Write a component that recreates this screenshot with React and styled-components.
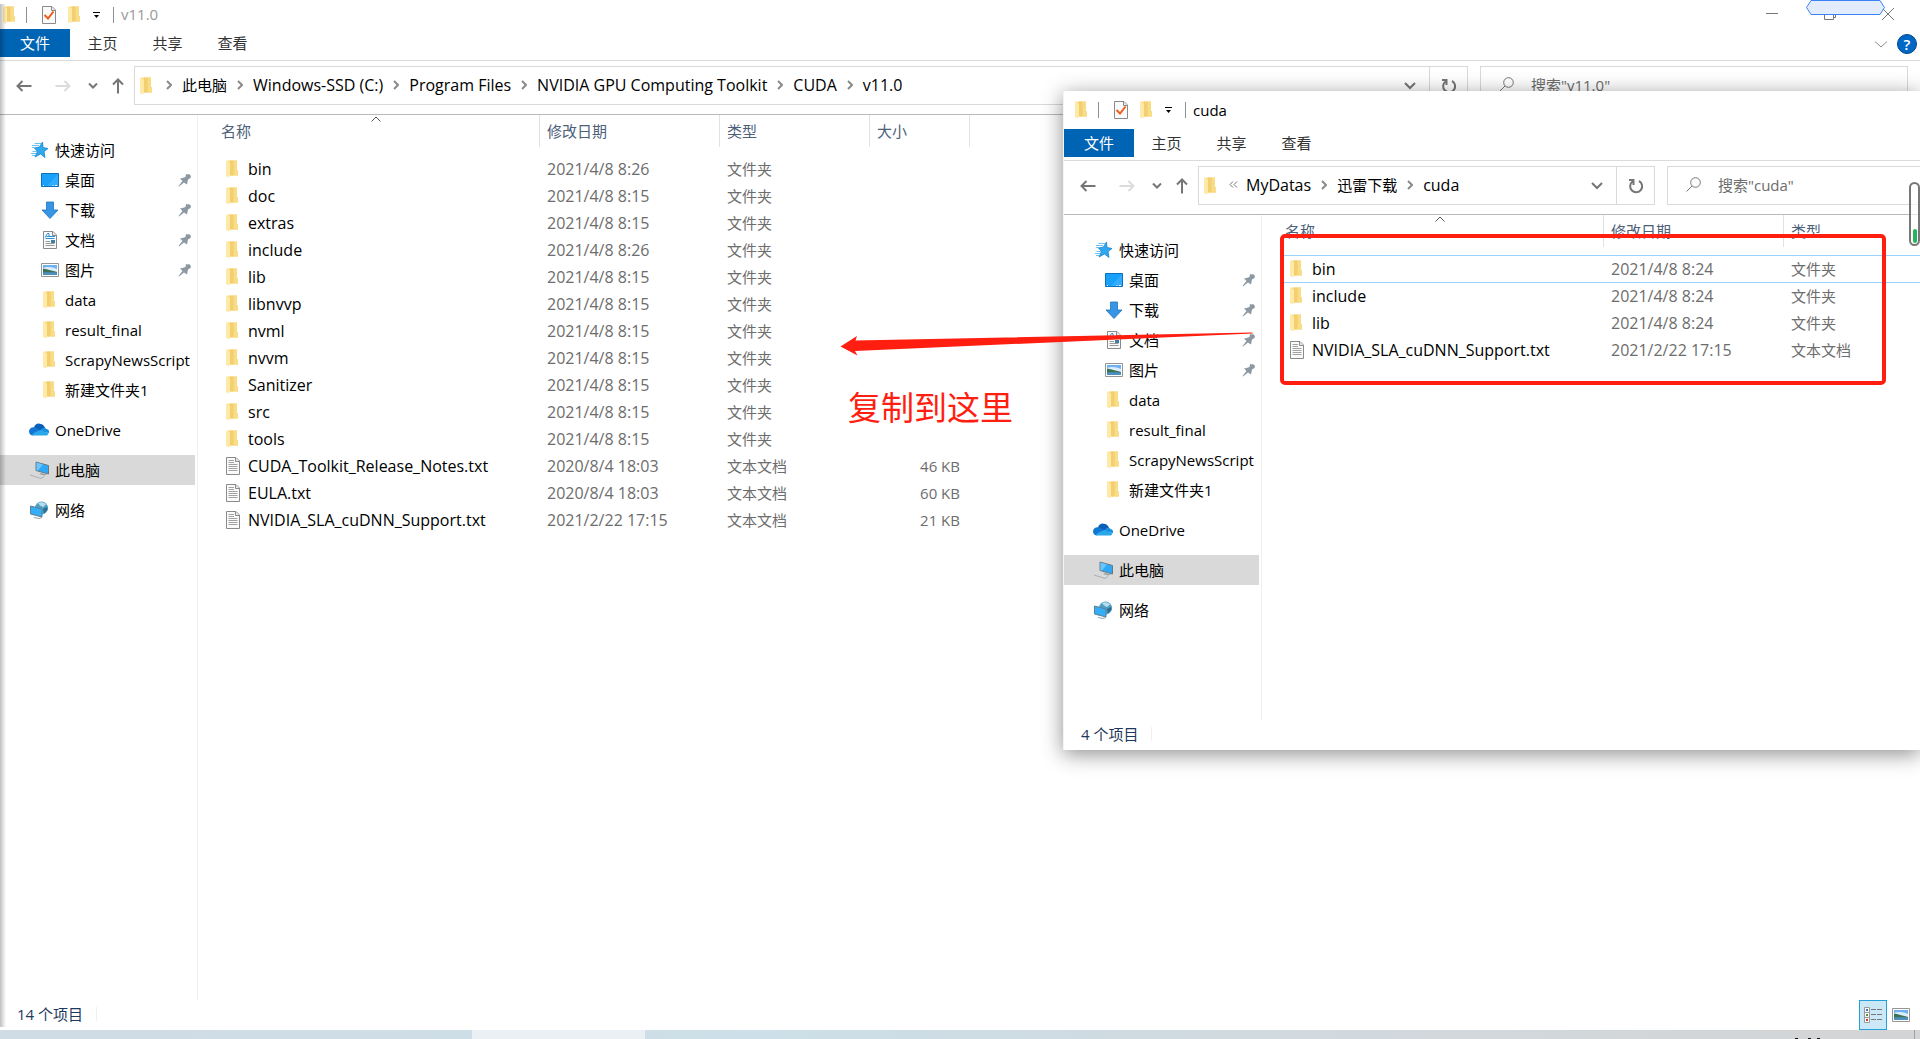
import React from "react";
import styled, { createGlobalStyle, css } from "styled-components";

const GlobalStyle = createGlobalStyle`
  * {
    box-sizing: border-box;
  }
  body {
    margin: 0;
    overflow: hidden;
    background: #fff;
  }
  body, button, input {
    font-family: "Open Sans", "Noto Sans CJK SC", sans-serif;
    font-size: 15px;
    line-height: 20px;
  }
  button {
    padding: 0;
    border: 0;
    background: none;
    color: inherit;
    cursor: pointer;
  }
  svg {
    display: block;
    flex: none;
  }
`;

const Desktop = styled.div`
  position: relative;
  display: flex;
  flex-direction: column;
  height: 100vh;
  overflow: hidden;
`;

const Window = styled.section`
  display: flex;
  flex-direction: column;
  background: #fff;
  overflow: hidden;
  ${(props) =>
    props.$floating
      ? css`
          position: absolute;
          top: 91px;
          left: 1063px;
          right: 0;
          height: 659px;
          border-left: 1px solid #f4f4f4;
          box-shadow: 0 4px 20px rgba(0, 0, 0, 0.45);
        `
      : css`
          flex: 1;
          min-height: 0;
        `}
`;

const TitleBar = styled.header`
  display: flex;
  align-items: center;
  flex: none;
  height: ${(props) => (props.$floating ? 38 : 29)}px;
  padding-left: ${(props) => (props.$floating ? 9 : 1)}px;
  padding-right: 3px;
`;

const QuickTools = styled.div`
  display: flex;
  align-items: center;
  gap: 8px;
  margin: 0 12px 0 13px;
`;

const Separator = styled.span`
  width: 1px;
  height: 16px;
  margin-left: ${(props) => props.$gap || 0}px;
  background: #8f8f8f;
`;

const Title = styled.h1`
  margin: 0 0 0 7px;
  padding-bottom: ${(props) => (props.$floating ? 0 : 2)}px;
  font-size: 15px;
  font-weight: 400;
  color: ${(props) => (props.$floating ? "#000" : "#999")};
`;

const WindowButtons = styled.div`
  display: flex;
  align-self: flex-start;
  margin-left: auto;
`;

const WindowButton = styled.button`
  display: grid;
  place-items: center;
  width: 58px;
  height: 28px;
`;

const Ribbon = styled.nav`
  display: flex;
  align-items: flex-start;
  flex: none;
  height: 32px;
  padding-right: 3px;
  border-bottom: 1px solid #dadbdc;
`;

const RibbonTab = styled.button`
  width: ${(props) => (props.$primary ? 70 : 65)}px;
  height: 28px;
  color: ${(props) => (props.$primary ? "#fff" : "#333")};
  background: ${(props) => (props.$primary ? "#0064b4" : "none")};
`;

const RibbonTools = styled.div`
  display: flex;
  align-items: center;
  gap: 10px;
  height: 30px;
  margin-left: auto;
`;

const HelpButton = styled.button`
  width: 20px;
  height: 20px;
  border: 1px solid #00498a;
  border-radius: 50%;
  background: #0067c5;
  color: #fff;
  font-weight: 600;
  line-height: 18px;
`;

const AddressRow = styled.div`
  display: flex;
  flex: none;
  height: 54px;
  padding: 5px ${(props) => (props.$floating ? 0 : 12)}px 0 4px;
  border-bottom: 1px solid #b9b9b9;
`;

const NavButton = styled.button`
  display: grid;
  place-items: center;
  width: ${(props) => props.$width}px;
  height: 40px;
`;

const AddressBox = styled.div`
  display: flex;
  align-items: center;
  flex: 1;
  min-width: 0;
  height: 39px;
  margin: 0 12px 0 2px;
  padding-left: 3px;
  border: 1px solid #d9d9d9;
`;

const Crumb = styled.a`
  padding-bottom: 2px;
  color: #000;
  font-size: ${(props) => (props.$latin ? 16 : 15)}px;
  text-decoration: none;
  white-space: nowrap;
`;

const CrumbArrow = styled.span`
  display: grid;
  place-items: center;
  width: 26px;
  padding-bottom: 2px;
`;

const BoxButton = styled.button`
  display: grid;
  place-items: center;
  width: 38px;
  height: 37px;
  ${(props) => props.$push && "margin-left: auto;"}
  ${(props) => props.$divided && "border-left: 1px solid #d9d9d9;"}
`;

const SearchBox = styled.label`
  display: flex;
  align-items: center;
  gap: 17px;
  flex: none;
  width: ${(props) => (props.$floating ? 253 : 428)}px;
  height: 39px;
  padding: 0 0 2px 18px;
  border: 1px solid #d9d9d9;
  ${(props) => props.$floating && "border-right: 0;"}
`;

const SearchInput = styled.input`
  flex: 1;
  min-width: 0;
  padding: 0;
  border: 0;
  outline: 0;
  background: none;
  &::placeholder {
    color: #6d6d6d;
    opacity: 1;
  }
`;

const Body = styled.div`
  display: flex;
  flex: 1;
  min-height: 0;
`;

const Sidebar = styled.nav`
  flex: none;
  width: 198px;
  padding: 20px 2px 0 0;
  border-right: 1px solid #f0f0f0;
`;

const PlaceGroup = styled.div`
  margin-bottom: 10px;
`;

const Place = styled.a`
  display: flex;
  align-items: center;
  gap: 6px;
  height: 30px;
  padding-left: ${(props) => (props.$child ? 41 : 29)}px;
  overflow: hidden;
  color: #000;
  text-decoration: none;
  white-space: nowrap;
  background: ${(props) => (props.$active ? "#d9d9d9" : "none")};
  & > svg:last-child:not(:first-child) {
    margin-left: auto;
    margin-right: 3px;
  }
`;

const FilePane = styled.main`
  flex: 1;
  min-width: 0;
  overflow: hidden;
  padding-left: 20px;
`;

const FileTable = styled.table`
  table-layout: fixed;
  width: ${(props) => (props.$wide ? "100%" : "752px")};
  border-collapse: separate;
  border-spacing: 0;
`;

const HeadCell = styled.th`
  position: relative;
  width: ${(props) => (props.$width ? `${props.$width}px` : "auto")};
  height: 32px;
  padding: 0 0 0 ${(props) => (props.$sorted ? 3 : 7)}px;
  border-right: ${(props) => (props.$width ? "1px solid #e2e2e2" : "0")};
  color: #4c607a;
  font-weight: 400;
  text-align: left;
  & > svg {
    position: absolute;
    top: 1px;
    left: 153px;
  }
`;

const FileBody = styled.tbody`
  &::before {
    content: "";
    display: block;
    height: 9px;
  }
`;

const FileRow = styled.tr`
  ${(props) =>
    props.$focused &&
    "td { box-shadow: 0 -1px 0 #99d1ff, inset 0 -1px 0 #99d1ff; }"}
`;

const Cell = styled.td`
  height: 27px;
  padding: 0 10px 2px 7px;
  color: #6d6d6d;
  font-size: ${(props) => (props.$latin ? 16 : 15)}px;
  text-align: ${(props) => props.$align || "left"};
  white-space: nowrap;
`;

const FileName = styled.div`
  display: flex;
  align-items: center;
  gap: 6px;
  color: #000;
`;

const NameCell = styled(Cell)`
  padding: 0 0 2px 6px;
`;

const StatusBar = styled.footer`
  display: flex;
  align-items: center;
  flex: none;
  height: 30px;
  padding: 0 5px 2px 17px;
  color: #1e395b;
`;

const StatusDivider = styled.span`
  width: 1px;
  height: 14px;
  margin-left: 13px;
  background: #f0f0f0;
`;

const ViewButtons = styled.div`
  display: flex;
  align-self: flex-start;
  margin-left: auto;
`;

const ViewButton = styled.button`
  display: grid;
  place-items: center;
  width: 28px;
  height: 30px;
  border: 1px solid ${(props) => (props.$active ? "#26a0da" : "transparent")};
  background: ${(props) => (props.$active ? "#cbe8f6" : "none")};
`;

const Taskbar = styled.div`
  display: flex;
  align-items: stretch;
  flex: none;
  height: 9px;
  padding-right: 5px;
  background: linear-gradient(90deg, #d0dce5, #cddfe8 40%, #d2d8dc 75%, #d3d4d5);
`;

const TaskButton = styled.button`
  width: 173px;
  margin-left: 472px;
  margin-right: auto;
  background: #eaf0f4;
`;

const Tray = styled.div`
  display: flex;
  align-items: flex-end;
  padding-right: 93px;
  border-right: 1px solid #a0a0a0;
`;

const EdgeShadow = styled.div`
  position: absolute;
  top: 4px;
  bottom: 12px;
  left: 0;
  width: 6px;
  background: linear-gradient(90deg, rgba(0, 0, 0, 0.25), transparent);
  pointer-events: none;
`;

const MarkBox = styled.div`
  position: absolute;
  top: 234px;
  left: 1280px;
  width: 606px;
  height: 151px;
  border: 4px solid #ff1e10;
  border-radius: 5px;
  pointer-events: none;
`;

const MarkArrow = styled.svg`
  position: absolute;
  top: 326px;
  left: 840px;
  pointer-events: none;
`;

const MarkText = styled.p`
  position: absolute;
  top: 388px;
  left: 848px;
  margin: 0;
  color: #ff1e10;
  font-size: 33px;
  line-height: 40px;
`;

const DockTab = styled.svg`
  position: absolute;
  top: 0;
  right: 35px;
`;

const Gauge = styled.div`
  position: absolute;
  top: 182px;
  right: 0;
  display: flex;
  align-items: flex-end;
  justify-content: center;
  width: 11px;
  height: 64px;
  padding-bottom: 1px;
  border: 2px solid #777;
  border-radius: 6px;
  background: rgba(255, 255, 255, 0.6);
`;

const GaugeLevel = styled.span`
  width: 4px;
  height: 14px;
  border-radius: 2px;
  background: #27b462;
`;

function FolderIcon() {
  return (
    <svg width="18" height="18" viewBox="0 0 18 18">
      <path d="M4 0.500H13V10L14 10.500V15.500H4Z" fill="#f7d87d" />
      <path d="M6 0.500H9.500V15.500H6Z" fill="#f2cf70" />
      <path d="M10 0.500H13V10L14 10.500V15.500H10Z" fill="#f9dc86" />
      <path d="M2 0.500H3.500L6 3V15L5 17.500L2 16Z" fill="#ffe9a6" />
    </svg>
  );
}

function PageIcon({ children }) {
  return (
    <svg width="18" height="18" viewBox="0 0 18 18">
      <path d="M2.500 0.500H12L15.500 4V17.500H2.500Z" fill="#fafafa" stroke="#8a8a8a" />
      <path d="M11.500 1V4.500H15.500" fill="#e8e8e8" stroke="#8a8a8a" />
      {children}
    </svg>
  );
}

function TextIcon() {
  return (
    <PageIcon>
      <path
        d="M4.500 3.500H10M4.500 5.500H10M4.500 7.500H13.500M4.500 9.500H13.500M4.500 11.500H13.500M4.500 13.500H13.500"
        stroke="#a2a2a2"
      />
    </PageIcon>
  );
}

function PropertiesIcon() {
  return (
    <PageIcon>
      <path d="M4.500 9L8 12.500L13.500 5.500" fill="none" stroke="#f05a1a" strokeWidth="2" />
    </PageIcon>
  );
}

function DocumentIcon() {
  return (
    <PageIcon>
      <path d="M4 6.500L6.500 2.500H8V6M5.500 5.500H14M4.500 7.500H13.500" fill="none" stroke="#2590d6" />
      <path d="M4.500 10.500H9M4.500 12.500H13.500M4.500 14.500H13.500" stroke="#9a9a9a" />
      <path d="M10 9H14V12H10Z" fill="#3d7ea8" />
    </PageIcon>
  );
}

function StarIcon() {
  return (
    <svg width="20" height="18" viewBox="-2 0 20 18">
      <path
        d="M11.500 1L12 6.500L17 7.500L13 10.500L14 16.500L9.500 13L4 16L6.500 10.500L3.500 7L8.500 6Z"
        fill="#2fa8f0"
        stroke="#1583cc"
        strokeWidth="0.8"
      />
      <path d="M3.500 2.500H10M1 4.500H8M1 6.500H4M1.500 10.500H6M0 12.500H5M1 14.500H4" stroke="#6cc2f4" />
    </svg>
  );
}

function DesktopIcon() {
  return (
    <svg width="18" height="18" viewBox="0 0 18 18">
      <path d="M0.500 2.500H17.500V15.500H0.500Z" fill="#19a0fb" stroke="#0a72bd" />
      <path d="M17 3V15H6Z" fill="#32acff" />
      <path d="M2 14.500H3M14 14.500H16M11.500 14.500H12.500" stroke="#fff" />
    </svg>
  );
}

function DownloadIcon() {
  return (
    <svg width="18" height="18" viewBox="0 0 18 18">
      <path
        d="M5.500 1H12.500V9H17L9 17.500L1 9H5.500Z"
        fill="#3795e6"
        stroke="#1f74bd"
        strokeWidth="0.8"
      />
    </svg>
  );
}

function PictureIcon() {
  return (
    <svg width="18" height="18" viewBox="0 0 18 18">
      <path d="M0.500 2.500H17.500V15.500H0.500Z" fill="#fff" stroke="#959595" />
      <path d="M2 4H16V14H2Z" fill="#6fb2f3" />
      <path d="M2 7C6 5 12 6 16 8V11H2Z" fill="#dceefb" />
      <path d="M2 7.500C5 8 9 9 16 11V12H2Z" fill="#3d7355" />
      <path d="M2 11.500C7 11 11 11.500 16 11.500V14H2Z" fill="#4d8fbf" />
    </svg>
  );
}

function CloudIcon() {
  return (
    <svg width="20" height="18" viewBox="0 0 20 18">
      <path d="M5 7C5.500 3 9 1.500 12 3C14 3.500 15.500 5 16 7L8 11Z" fill="#0a5fb8" />
      <path d="M0 10.500C0 7.500 3 5.500 6 6.500L12 9.500L4 14.500C2 14.500 0 13 0 10.500Z" fill="#1276d3" />
      <path d="M12 9C13 6.500 16 6 17.500 8C20 8.500 20.500 10.500 20 12L12 11Z" fill="#1a8fe0" />
      <path d="M3 14C5 11 9 10 11.500 9L19.500 12.500C19 14 18 14.500 17 14.500H4.500Z" fill="#29a7ea" />
    </svg>
  );
}

function ComputerIcon() {
  return (
    <svg width="20" height="18" viewBox="0 0 20 18">
      <path d="M7 1L19.500 4.500V13L7 9.500Z" fill="#2ea9f7" stroke="#6b7880" />
      <path d="M7.500 1.500L14 3.500L9 9.500L7.500 9Z" fill="#6cc5fb" />
      <path d="M12 12L18 13.500L15 14.500L10 13" fill="#9aa2a8" />
      <path d="M1 14L12 17.500L15 15.500" fill="none" stroke="#a8b0b5" />
    </svg>
  );
}

function NetworkIcon() {
  return (
    <svg width="20" height="18" viewBox="0 0 20 18">
      <circle cx="12.500" cy="7" r="6.500" fill="#4f9fc4" />
      <path d="M9 2C12 0.500 15 1 17 3.500L14 6L11 4.500Z" fill="#b8dcec" />
      <path d="M14 8L18 6L18.500 9L15 12.500Z" fill="#2b6c91" />
      <path d="M1.500 5L13 8V16L1.500 13Z" fill="#35aef8" stroke="#5e7f94" />
      <path d="M5 16.500L10 17.500L13 16.500" fill="none" stroke="#9aa2a8" />
    </svg>
  );
}

function PinIcon() {
  return (
    <svg width="14" height="14" viewBox="0 0 14 14">
      <path
        d="M8 1L9.500 1.500L11 1L13 3L12.500 5L10 6.500L9.500 9L9 11.500L6 9.500L1 13.500L0.500 13L4.500 8L2 5.500L4.500 5L7.500 4Z"
        fill="#8c99a3"
      />
    </svg>
  );
}

function Stroke({ width, height, d, color = "#767676", weight = 1 }) {
  return (
    <svg width={width} height={height} viewBox={`0 0 ${width} ${height}`}>
      <path d={d} fill="none" stroke={color} strokeWidth={weight} />
    </svg>
  );
}

function RefreshIcon() {
  return (
    <Stroke
      width={16}
      height={16}
      weight={2}
      d="M11 3A6 6 0 1 1 4.500 3.500M1 2H5.500V7"
    />
  );
}

function SearchIcon() {
  return (
    <svg width="15" height="15" viewBox="0 0 15 15" fill="none" stroke="#767676">
      <circle cx="9.500" cy="5.500" r="4.800" />
      <path d="M6 9L0.500 14.500" />
    </svg>
  );
}

function DetailsIcon() {
  return (
    <svg width="18" height="16" viewBox="0 0 18 16">
      <path d="M0.500 0.500H5.500V15.500H0.500ZM0.500 5.500H5.500M0.500 10.500H5.500" fill="#fff" stroke="#999" />
      <path d="M2 2H4V4H2Z" fill="#3b7ab5" />
      <path d="M2 7H4V9H2Z" fill="#5f8a3c" />
      <path d="M2 12H4V14H2Z" fill="#c63b2b" />
      <path d="M7 2.500H12M13 2.500H18M7 7.500H12M13 7.500H18M7 12.500H12M13 12.500H18" stroke="#777" />
    </svg>
  );
}

const quickAccess = [
  { name: "桌面", Icon: DesktopIcon, pinned: true },
  { name: "下载", Icon: DownloadIcon, pinned: true },
  { name: "文档", Icon: DocumentIcon, pinned: true },
  { name: "图片", Icon: PictureIcon, pinned: true },
  { name: "data", Icon: FolderIcon },
  { name: "result_final", Icon: FolderIcon },
  { name: "ScrapyNewsScript", Icon: FolderIcon },
  { name: "新建文件夹1", Icon: FolderIcon },
];

const folder = (name, date) => ({ name, date, type: "文件夹" });
const text = (name, date, size) => ({ name, date, type: "文本文档", size });

const toolkitFiles = [
  folder("bin", "2021/4/8 8:26"),
  folder("doc", "2021/4/8 8:15"),
  folder("extras", "2021/4/8 8:15"),
  folder("include", "2021/4/8 8:26"),
  folder("lib", "2021/4/8 8:15"),
  folder("libnvvp", "2021/4/8 8:15"),
  folder("nvml", "2021/4/8 8:15"),
  folder("nvvm", "2021/4/8 8:15"),
  folder("Sanitizer", "2021/4/8 8:15"),
  folder("src", "2021/4/8 8:15"),
  folder("tools", "2021/4/8 8:15"),
  text("CUDA_Toolkit_Release_Notes.txt", "2020/8/4 18:03", "46 KB"),
  text("EULA.txt", "2020/8/4 18:03", "60 KB"),
  text("NVIDIA_SLA_cuDNN_Support.txt", "2021/2/22 17:15", "21 KB"),
];

const cudnnFiles = [
  folder("bin", "2021/4/8 8:24"),
  folder("include", "2021/4/8 8:24"),
  folder("lib", "2021/4/8 8:24"),
  text("NVIDIA_SLA_cuDNN_Support.txt", "2021/2/22 17:15"),
];

function Places() {
  return (
    <Sidebar aria-label="导航窗格">
      <PlaceGroup>
        <Place href="#quick">
          <StarIcon />
          快速访问
        </Place>
        {quickAccess.map(({ name, Icon, pinned }) => (
          <Place key={name} href="#place" $child>
            <Icon />
            {name}
            {pinned && <PinIcon />}
          </Place>
        ))}
      </PlaceGroup>
      <PlaceGroup>
        <Place href="#onedrive">
          <CloudIcon />
          OneDrive
        </Place>
      </PlaceGroup>
      <PlaceGroup>
        <Place href="#pc" $active>
          <ComputerIcon />
          此电脑
        </Place>
      </PlaceGroup>
      <PlaceGroup>
        <Place href="#network">
          <NetworkIcon />
          网络
        </Place>
      </PlaceGroup>
    </Sidebar>
  );
}

function Files({ files, focused, showSize }) {
  return (
    <FilePane>
      <FileTable $wide={!showSize}>
        <thead>
          <tr>
            <HeadCell $width={322} $sorted>
              名称
              <Stroke width={10} height={6} d="M0.500 5.500L5 1L9.500 5.500" color="#555" />
            </HeadCell>
            <HeadCell $width={180}>修改日期</HeadCell>
            <HeadCell $width={showSize && 150}>类型</HeadCell>
            {showSize && <HeadCell $width={100}>大小</HeadCell>}
          </tr>
        </thead>
        <FileBody>
          {files.map((file) => (
            <FileRow key={file.name} $focused={file.name === focused}>
              <NameCell $latin>
                <FileName>
                  {file.type === "文件夹" ? <FolderIcon /> : <TextIcon />}
                  {file.name}
                </FileName>
              </NameCell>
              <Cell $latin>{file.date}</Cell>
              <Cell>{file.type}</Cell>
              {showSize && <Cell $align="right">{file.size}</Cell>}
            </FileRow>
          ))}
        </FileBody>
      </FileTable>
    </FilePane>
  );
}

function Explorer({ title, crumbs, collapsed, files, focused, floating }) {
  return (
    <Window $floating={floating}>
      <TitleBar $floating={floating}>
        <FolderIcon />
        <Separator $gap={7} />
        <QuickTools>
          <PropertiesIcon />
          <FolderIcon />
          <svg width="9" height="8" viewBox="0 0 9 8">
            <path d="M1 1.500H8" stroke="#000" />
            <path d="M2 4H7L4.500 7Z" />
          </svg>
        </QuickTools>
        <Separator />
        <Title $floating={floating}>{title}</Title>
        {!floating && (
          <WindowButtons>
            <WindowButton aria-label="最小化">
              <Stroke width={12} height={12} d="M0 5.500H12" />
            </WindowButton>
            <WindowButton aria-label="还原">
              <Stroke width={12} height={12} d="M0.500 2.500H9.500V11.500H0.500ZM2.500 2V0.500H11.500V9.500H10" />
            </WindowButton>
            <WindowButton aria-label="关闭">
              <Stroke width={12} height={12} d="M0 0L12 12M12 0L0 12" />
            </WindowButton>
          </WindowButtons>
        )}
      </TitleBar>
      <Ribbon>
        <RibbonTab $primary>文件</RibbonTab>
        <RibbonTab>主页</RibbonTab>
        <RibbonTab>共享</RibbonTab>
        <RibbonTab>查看</RibbonTab>
        {!floating && (
          <RibbonTools>
            <button aria-label="展开功能区">
              <Stroke width={12} height={7} d="M0 0.500L6 6L12 0.500" color="#8a8a8a" />
            </button>
            <HelpButton aria-label="帮助">?</HelpButton>
          </RibbonTools>
        )}
      </Ribbon>
      <AddressRow $floating={floating}>
        <NavButton $width={39} aria-label="后退">
          <Stroke width={16} height={12} weight={2} d="M15.500 6H1.500M6.500 1L1.500 6L6.500 11" />
        </NavButton>
        <NavButton $width={39} aria-label="前进">
          <Stroke width={16} height={12} weight={2} color="#dcdcdc" d="M0.500 6H14.500M9.500 1L14.500 6L9.500 11" />
        </NavButton>
        <NavButton $width={22} aria-label="最近位置">
          <Stroke width={10} height={6} weight={2} d="M1 0.500L5 4.500L9 0.500" />
        </NavButton>
        <NavButton $width={28} aria-label="上移">
          <Stroke width={12} height={16} weight={2} d="M6 15.500V1.500M1 6.500L6 1.500L11 6.500" />
        </NavButton>
        <AddressBox>
          <FolderIcon />
          {crumbs.map((crumb, i) => (
            <React.Fragment key={crumb}>
              <CrumbArrow>
                {collapsed && i === 0 ? (
                  <Stroke width={9} height={7} d="M4 0.500L1 3.500L4 6.500M8 0.500L5 3.500L8 6.500" />
                ) : (
                  <Stroke width={6} height={10} weight={2} d="M1 1L5 5L1 9" color="#8a8a8a" />
                )}
              </CrumbArrow>
              <Crumb href="#crumb" $latin={/^[\x20-\x7e]+$/.test(crumb)}>
                {crumb}
              </Crumb>
            </React.Fragment>
          ))}
          <BoxButton $push aria-label="以前的位置">
            <Stroke width={12} height={8} weight={2} d="M1 1L6 6L11 1" />
          </BoxButton>
          <BoxButton $divided aria-label="刷新">
            <RefreshIcon />
          </BoxButton>
        </AddressBox>
        <SearchBox $floating={floating}>
          <SearchIcon />
          <SearchInput type="text" aria-label="搜索" placeholder={`搜索"${title}"`} />
        </SearchBox>
      </AddressRow>
      <Body>
        <Places />
        <Files files={files} focused={focused} showSize={!floating} />
      </Body>
      <StatusBar>
        {files.length} 个项目
        <StatusDivider />
        {!floating && (
          <ViewButtons>
            <ViewButton $active aria-label="详细信息">
              <DetailsIcon />
            </ViewButton>
            <ViewButton aria-label="大缩略图">
              <PictureIcon />
            </ViewButton>
          </ViewButtons>
        )}
      </StatusBar>
    </Window>
  );
}

export default function App() {
  return (
    <>
      <GlobalStyle />
      <Desktop>
        <Explorer
          title="v11.0"
          crumbs={[
            "此电脑",
            "Windows-SSD (C:)",
            "Program Files",
            "NVIDIA GPU Computing Toolkit",
            "CUDA",
            "v11.0",
          ]}
          files={toolkitFiles}
        />
        <Taskbar>
          <TaskButton aria-label="文件资源管理器" />
          <Tray>
            <Stroke width={27} height={1} color="#111" d="M1 0.500H4M14 0.500H17M23 0.500H26" />
          </Tray>
        </Taskbar>
        <EdgeShadow />
        <DockTab width="79" height="16" viewBox="0 0 79 16">
          <path
            d="M5 0.500H74L78.500 7.500L74 14.500H5L0.500 7.500Z"
            fill="#e3ecfd"
            stroke="#3b82f6"
            strokeLinejoin="round"
          />
        </DockTab>
        <Explorer
          floating
          collapsed
          title="cuda"
          crumbs={["MyDatas", "迅雷下载", "cuda"]}
          files={cudnnFiles}
          focused="bin"
        />
        <Gauge>
          <GaugeLevel />
        </Gauge>
        <MarkBox />
        <MarkArrow width="414" height="32" viewBox="0 0 414 32">
          <path d="M0.500 20.500L17 10L15.500 14.500L412 6.500L413 7.500L15 25L17.500 29.500Z" fill="#ff1e10" />
        </MarkArrow>
        <MarkText>复制到这里</MarkText>
      </Desktop>
    </>
  );
}
